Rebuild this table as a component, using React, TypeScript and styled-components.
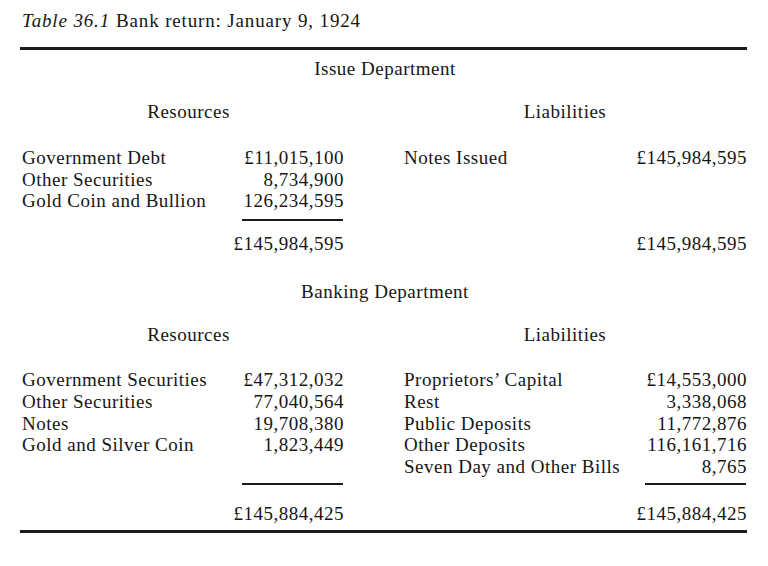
import React from 'react';
import styled, { createGlobalStyle } from 'styled-components';

// =============================================================================
// Styled Components
// =============================================================================

const GlobalStyle = createGlobalStyle`
  html, body {
    margin: 0;
    padding: 0;
    background: #ffffff;
  }
  body {
    font-family: "Liberation Serif", "DejaVu Serif", serif;
    color: #161616;
  }
`;

const Page = styled.div`
  width: 768px;
  height: 566px;
  box-sizing: border-box;
  padding: 10px 21px 0 20px;
  font-size: 19px;
  line-height: 21.7px;
  letter-spacing: 0.5px;
`;

const Caption = styled.div`
  padding-left: 2px;
  line-height: 22px;
  letter-spacing: 0.85px;
  em {
    margin-right: 6px;
  }
`;

const Rule = styled.div<{ $top: number }>`
  margin-top: ${(p) => p.$top}px;
  height: 2.5px;
  background: #1b1b1b;
`;

const DeptTitle = styled.div<{ $top: number }>`
  margin-top: ${(p) => p.$top}px;
  text-align: center;
  padding-left: 3px;
`;

const SideHeads = styled.div<{ $top: number }>`
  margin-top: ${(p) => p.$top}px;
  display: grid;
  grid-template-columns: 321px 61px 343px;
  padding-left: 2px;
  div:first-child {
    text-align: center;
    padding-left: 12px;
  }
  div:last-child {
    text-align: center;
    padding-right: 21px;
  }
`;

const Ledger = styled.div<{ $top: number }>`
  margin-top: ${(p) => p.$top}px;
  display: grid;
  grid-template-columns: 206px 115px 61px 227px 115px;
  padding-left: 2px;
  white-space: nowrap;
`;

const Label = styled.div``;

const Amount = styled.div`
  text-align: right;
  margin-right: -1px;
`;

const Underline = styled.div<{ $top: number }>`
  justify-self: end;
  width: 101px;
  margin-top: ${(p) => p.$top}px;
  height: 2px;
  background: #1b1b1b;
`;

// =============================================================================
// Data
// =============================================================================

type Line = [string, string];

const issueLeft: Line[] = [
  ['Government Debt', '£11,015,100'],
  ['Other Securities', '8,734,900'],
  ['Gold Coin and Bullion', '126,234,595'],
];
const issueRight: Line[] = [['Notes Issued', '£145,984,595']];

const bankLeft: Line[] = [
  ['Government Securities', '£47,312,032'],
  ['Other Securities', '77,040,564'],
  ['Notes', '19,708,380'],
  ['Gold and Silver Coin', '1,823,449'],
];
const bankRight: Line[] = [
  ['Proprietors\u2019 Capital', '£14,553,000'],
  ['Rest', '3,338,068'],
  ['Public Deposits', '11,772,876'],
  ['Other Deposits', '116,161,716'],
  ['Seven Day and Other Bills', '8,765'],
];

// =============================================================================
// Main Component
// =============================================================================

const Rows = ({ left, right }: { left: Line[]; right: Line[] }) => {
  const count = Math.max(left.length, right.length);
  const cells: React.ReactNode[] = [];
  for (let i = 0; i < count; i++) {
    const l = left[i];
    const r = right[i];
    cells.push(
      <Label key={`ll${i}`}>{l ? l[0] : ''}</Label>,
      <Amount key={`la${i}`}>{l ? l[1] : ''}</Amount>,
      <div key={`s${i}`} />,
      <Label key={`rl${i}`}>{r ? r[0] : ''}</Label>,
      <Amount key={`ra${i}`}>{r ? r[1] : ''}</Amount>
    );
  }
  return <>{cells}</>;
};

const Totals = ({ top, left, right }: { top: number; left: string; right: string }) => (
  <Ledger $top={top}>
    <div />
    <Amount>{left}</Amount>
    <div />
    <div />
    <Amount>{right}</Amount>
  </Ledger>
);

const App = () => {
  return (
    <Page>
      <GlobalStyle />
      <Caption>
        <em>Table 36.1</em>Bank return: January 9, 1924
      </Caption>
      <Rule $top={15} />

      <DeptTitle $top={8}>Issue Department</DeptTitle>
      <SideHeads $top={22}>
        <div>Resources</div>
        <div />
        <div>Liabilities</div>
      </SideHeads>
      <Ledger $top={24}>
        <Rows left={issueLeft} right={issueRight} />
        <div />
        <Underline $top={7} />
      </Ledger>
      <Totals top={12} left="£145,984,595" right="£145,984,595" />

      <DeptTitle $top={26}>Banking Department</DeptTitle>
      <SideHeads $top={22}>
        <div>Resources</div>
        <div />
        <div>Liabilities</div>
      </SideHeads>
      <Ledger $top={23}>
        <Rows left={bankLeft} right={bankRight} />
        <div />
        <Underline $top={5} />
        <div />
        <div />
        <Underline $top={5} />
      </Ledger>
      <Totals top={18} left="£145,884,425" right="£145,884,425" />
      <Rule $top={6} />
    </Page>
  );
};

export default App;
